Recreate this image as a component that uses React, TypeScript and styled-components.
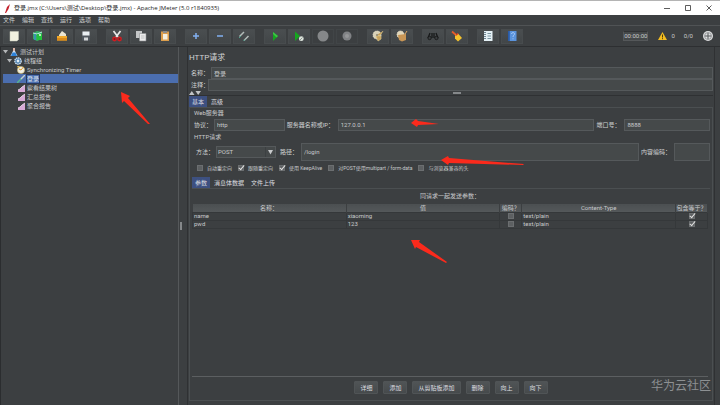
import React from "react";
import styled, { createGlobalStyle, css } from "styled-components";

const Global = createGlobalStyle`
  *, *::before, *::after { box-sizing: border-box; }
  html, body { margin: 0; background: #3c3f41; }
  body, button, input, select {
    font-family: Roboto, "Noto Sans CJK SC", sans-serif;
    font-size: 6px;
    line-height: 8px;
    color: #c8cacc;
  }
`;

const Window = styled.div`
  position: relative;
  display: flex;
  flex-direction: column;
  min-height: 100vh;
  background: #3c3f41;
  overflow: hidden;
`;

const TitleBar = styled.header`
  display: flex;
  align-items: center;
  height: 15px;
  padding: 0 6px 0 5px;
  gap: 4px;
  background: #fff;
  border-top: 1px solid #b4b4b4;
  color: #222;
`;

const Title = styled.span`
  flex: 1;
  font-family: "Open Sans", "Noto Sans CJK SC", sans-serif;
  white-space: nowrap;
`;

const WindowControls = styled.div`
  display: flex;
  gap: 11px;
`;

const ControlButton = styled.button`
  display: flex;
  width: 10px;
  height: 10px;
  padding: 2px;
  border: 0;
  background: none;
`;

const MenuBar = styled.nav`
  display: flex;
  align-items: center;
  gap: 7px;
  height: 11px;
  padding: 0 3px;
  border-bottom: 1px solid #505355;
`;

const MenuButton = styled.button`
  padding: 0;
  border: 0;
  background: none;
  color: #d0d2d3;
`;

const Toolbar = styled.div`
  display: flex;
  align-items: center;
  gap: 9px;
  height: 21px;
  padding: 0 6px 0 3px;
  border-bottom: 1px solid #2d2f31;
`;

const ToolGroup = styled.div`
  display: flex;
  gap: 2px;
`;

const ToolButton = styled.button<{ $flat?: boolean }>`
  display: flex;
  align-items: center;
  justify-content: center;
  width: 22px;
  height: 15px;
  padding: 0;
  border: 1px solid ${(p) => (p.$flat ? "#414547" : "#484c4e")};
  background: ${(p) => (p.$flat ? "#3c3f41" : "linear-gradient(#4a4e50, #424648)")};
`;

const Status = styled.div`
  display: flex;
  align-items: center;
  gap: 9px;
  margin-left: auto;
`;

const Elapsed = styled.output`
  margin-right: 1px;
  border: 1px solid #55585a;
  border-top-color: #303234;
  background: #45494a;
`;

const Warnings = styled.span`
  display: flex;
  align-items: center;
  gap: 4px;
`;

const Body = styled.div`
  display: flex;
  flex: 1;
`;

const Sidebar = styled.aside`
  width: 178px;
  padding-left: 2px;
  background: #3c3f41;
  border-left: 1px solid #2b2d2f;
`;

const Tree = styled.ul`
  margin: 0;
  padding: 0;
  list-style: none;
`;

const TreeRow = styled.li<{ $depth: number; $selected?: boolean }>`
  display: flex;
  align-items: center;
  gap: 2px;
  height: 9px;
  padding-left: ${(p) => [0, 4, 14][p.$depth]}px;
  white-space: nowrap;
  background: ${(p) => (p.$selected ? "#4b6eaf" : "transparent")};
`;

const TreeLabel = styled.span<{ $selected?: boolean }>`
  ${(p) => p.$selected && css`outline: 1px solid #27385c; color: #dde3ee;`}
`;

const Splitter = styled.div`
  display: flex;
  align-items: center;
  width: 10px;
  padding-left: 1px;
  border-left: 1px solid #55585a;
  border-right: 1px solid #2f3133;
`;

const Grip = styled.span<{ $wide?: boolean }>`
  width: ${(p) => (p.$wide ? 8 : 2)}px;
  height: ${(p) => (p.$wide ? 2 : 8)}px;
  background: #85888a;
`;

const Main = styled.main`
  display: flex;
  flex: 1;
  flex-direction: column;
  min-width: 0;
  margin-right: 5px;
  padding: 5px 1px 4px 1px;
  border-right: 1px solid #2f3133;
`;

const Heading = styled.h1`
  margin: 0 0 3px;
  font-size: 8px;
  line-height: 12px;
  font-weight: 400;
  color: #d0d2d3;
`;

const Row = styled.div<{ $height: number; $indent?: number }>`
  display: flex;
  align-items: center;
  height: ${(p) => p.$height}px;
  padding-left: ${(p) => p.$indent ?? 0}px;
`;

const Label = styled.label<{ $width: number }>`
  flex: none;
  width: ${(p) => p.$width}px;
  padding-left: 2px;
  white-space: nowrap;
  color: #d0d2d3;
`;

const fieldLook = css`
  min-width: 0;
  border: 1px solid #55595b;
  border-radius: 0;
  background: #45494a;
  outline: 0;
`;

const TextField = styled.input<{ $grow: number; $tall?: boolean }>`
  ${fieldLook}
  flex: ${(p) => p.$grow} 1 0;
  height: ${(p) => (p.$tall ? 18 : 12)}px;
  padding: 0 2px;
`;

const SelectBox = styled.span`
  position: relative;
  display: flex;
  width: 60px;
  margin-right: 2px;
`;

const Select = styled.select`
  ${fieldLook}
  appearance: none;
  width: 100%;
  height: 12px;
  padding: 0 1px;
`;

const SelectArrow = styled.svg`
  position: absolute;
  right: 1px;
  top: 1px;
  pointer-events: none;
`;

const Collapse = styled.div`
  display: flex;
  align-items: center;
  height: 5px;
  border-bottom: 1px solid #2f3133;
`;

const CollapseGrip = styled.div`
  display: flex;
  flex: 1;
  justify-content: center;
`;

const Tabs = styled.div`
  display: flex;
  gap: 1px;
  height: 12px;
  border-bottom: 1px solid #4b4f51;
`;

const Tab = styled.button<{ $active?: boolean }>`
  padding: 0 3px;
  border: 0;
  background: ${(p) => (p.$active ? "#3d5080" : "transparent")};
  color: #dcdee0;
`;

const Panel = styled.section`
  display: flex;
  flex: 1;
  flex-direction: column;
  padding: 0 2px 2px 2px;
  border: 1px solid #4b4f51;
  border-top: 0;
`;

const Legend = styled.h2`
  margin: 0;
  padding-left: 2px;
  font-size: 6px;
  line-height: 9px;
  font-weight: 400;
`;

const Options = styled.div`
  display: flex;
  align-items: center;
  gap: 6px;
  height: 12px;
  padding-left: 5px;
  margin-bottom: 3px;
`;

const Option = styled.label`
  display: flex;
  align-items: center;
  gap: 4px;
  font-size: 5px;
  white-space: nowrap;
`;

const Check = styled.input`
  position: relative;
  appearance: none;
  flex: none;
  width: 6px;
  height: 6px;
  margin: 0;
  border: 1px solid #6b6e70;
  background: #5d6062;
  &:checked::after {
    content: "";
    position: absolute;
    left: 1px;
    top: -2px;
    width: 3px;
    height: 6px;
    border: solid #e0e0e0;
    border-width: 0 1px 1px 0;
    transform: rotate(40deg);
  }
`;

const ParamsPanel = styled.div`
  display: flex;
  flex: 1;
  flex-direction: column;
  padding: 2px 2px 0 0;
`;

const Caption = styled.div`
  height: 13px;
  padding-top: 1px;
  text-align: center;
`;

const TableArea = styled.div`
  flex: 1;
  border-bottom: 1px solid #5c5f61;
`;

const Table = styled.table`
  width: 100%;
  table-layout: fixed;
  border-collapse: collapse;
`;

const HeaderCell = styled.th`
  height: 8px;
  padding: 0;
  border-right: 1px solid #3c3f41;
  background: linear-gradient(#4b4f51, #54585a);
  font-weight: 400;
  line-height: 7px;
  white-space: nowrap;
`;

const Cell = styled.td<{ $center?: boolean }>`
  height: 8px;
  padding: 0 1px;
  border: 1px solid #35383a;
  line-height: 6px;
  text-align: ${(p) => (p.$center ? "center" : "left")};
  & > input { display: block; margin: 0 auto; }
`;

const Actions = styled.div`
  display: flex;
  justify-content: center;
  gap: 5px;
  padding: 4px 0;
`;

const ActionButton = styled.button`
  height: 13px;
  padding: 0 5px;
  border: 1px solid #505456;
  border-radius: 1px;
  background: linear-gradient(#505456, #464a4c);
  color: #dcdee0;
`;

const Overlay = styled.svg`
  position: absolute;
  left: 0;
  top: 0;
  pointer-events: none;
`;

const Watermark = styled.div`
  position: absolute;
  right: 9px;
  bottom: 10px;
  font-size: 12px;
  line-height: 18px;
  color: #8d9092;
`;

const iconShapes: Record<string, React.ReactNode> = {
  新建: <path d="M2 1.5h8.500v8L9 11H2z" fill="#f1f1df" stroke="#c6c8b8" strokeWidth=".5" />,
  模板: (
    <>
      <path d="M1 3l4-2 5 1v7l-5 2-4-2z" fill="#35ad63" />
      <path d="M1 3l4 1 5-2" stroke="#b9e6df" fill="none" />
      <rect x="5" y="4" width="5" height="6" fill="#23c23d" />
      <path d="M3 4v6" stroke="#3d8bc9" strokeWidth="1.500" />
      <circle cx="8" cy="5" r="1" fill="#eafbe8" />
    </>
  ),
  打开: (
    <>
      <path d="M3 5l3-4 4 3v3H3z" fill="#ece6d2" />
      <path d="M1 6h10v4.500H1z" fill="#f0a92b" />
      <path d="M1 8h10v2.500H1z" fill="#db8a19" />
    </>
  ),
  保存: (
    <>
      <rect x="2" y="1.500" width="8" height="9" fill="#50575f" />
      <rect x="2.500" y="1.500" width="7" height="4" fill="#e9eef2" />
      <rect x="4" y="7.500" width="4" height="3" fill="#d3d6d8" />
    </>
  ),
  剪切: (
    <>
      <path d="M2.500 1l4.500 6M9.500 1L5 7" stroke="#e8e8e8" strokeWidth="1.700" />
      <circle cx="3.500" cy="9" r="1.700" fill="#7d1d20" stroke="#d01d22" strokeWidth="1.400" />
      <circle cx="8.500" cy="9" r="1.700" fill="#7d1d20" stroke="#d01d22" strokeWidth="1.400" />
    </>
  ),
  复制: (
    <>
      <path d="M1 1h6v7H1z" fill="#c4c6c7" />
      <path d="M4.500 3.500h6.500V11H4.500z" fill="#ececec" stroke="#8c8f91" strokeWidth=".6" />
      <path d="M6 6h3.500M6 8h3.500" stroke="#a4a7a9" strokeWidth=".6" />
    </>
  ),
  粘贴: (
    <>
      <rect x="2" y="1.500" width="8" height="9.500" fill="#dc9e4c" />
      <rect x="4" y="1" width="4" height="2" fill="#8b8b8b" />
      <path d="M4 4h4.500v5.500H4z" fill="#f3efe2" />
    </>
  ),
  展开: <path d="M6 3v6M3 6h6" stroke="#82b1f2" strokeWidth="1.500" />,
  折叠: <path d="M3 6h6" stroke="#82b1f2" strokeWidth="1.500" />,
  切换: (
    <>
      <path d="M1.500 6.500L6 2M6 10.500L10.500 6" stroke="#b3bcb9" strokeWidth="1.500" />
      <path d="M1 8l2-2M5.500 11l1.500-1.500" stroke="#4d9f8c" />
    </>
  ),
  启动: (
    <>
      <path d="M4 2l5 4-5 5z" fill="#15a51f" />
      <path d="M4 2l5 4-1.500 1.500L4 4z" fill="#3cc445" />
    </>
  ),
  无间隔启动: (
    <>
      <path d="M2 1.500l5 4.500-5 5z" fill="#15a51f" />
      <circle cx="8.300" cy="8.700" r="2.400" fill="#dce4dc" />
      <path d="M7 10l2.500-2.500" stroke="#6a716b" strokeWidth=".7" />
    </>
  ),
  停止: <circle cx="6" cy="6" r="5.500" fill="#858789" />,
  关闭: (
    <>
      <circle cx="6" cy="6" r="4.500" fill="#808285" />
      <circle cx="6" cy="6" r="2" fill="#959799" />
    </>
  ),
  清除: (
    <>
      <circle cx="5" cy="5" r="4" fill="#d9d2b8" strokeDasharray="1 1" stroke="#efe9d0" />
      <path d="M4 5.500h4L11 1M4 6h5v3l-3 2z" fill="#c8a25c" stroke="#d8c184" strokeWidth=".7" />
      <circle cx="5" cy="5" r="1" fill="#8c8876" />
    </>
  ),
  清除全部: (
    <>
      <circle cx="4.500" cy="4.500" r="3.500" fill="#e2d7ba" strokeDasharray="1 1" stroke="#f0e8d0" />
      <path d="M2 5l8-1v6l-4 1.500-3-1.500z" fill="#c99655" />
      <path d="M9 4l2-3" stroke="#dba55f" />
    </>
  ),
  搜索: (
    <>
      <path d="M3 3L1 8M9 3l2 5M5 3v5M7 3v5" stroke="#17191a" strokeWidth="1.300" />
      <circle cx="2.600" cy="8" r="1.700" fill="#3a3e40" stroke="#111" strokeWidth=".7" />
      <circle cx="9.400" cy="8" r="1.700" fill="#3a3e40" stroke="#111" strokeWidth=".7" />
    </>
  ),
  重置搜索: (
    <>
      <path d="M1 1.500l4 3.500" stroke="#e45b2b" strokeWidth="1.800" />
      <path d="M4 4.500l3-1 4 4.500-4 3.500-3-3z" fill="#f4c22d" />
      <path d="M4.500 5.500l2.500-2" stroke="#d72e25" strokeWidth="1.300" />
    </>
  ),
  函数助手: (
    <>
      <rect x="2" y="1" width="8.500" height="10" fill="#e4f0f5" />
      <path d="M3 2v8" stroke="#486170" strokeDasharray="1 1" strokeWidth="1.500" />
      <path d="M5.500 3.500h3.500M5.500 6h3.500M5.500 8.500h3.500" stroke="#6e8b99" strokeWidth=".9" />
    </>
  ),
  帮助: (
    <>
      <path d="M2 1h8.500v10H2z" fill="#5a93dc" />
      <path d="M2 1h1.800v10H2z" fill="#2a5ba7" />
      <path d="M5.500 4c0-2 3.500-1.700 3 .2C8.200 5.400 7 5.300 7 7M7 8.300v1" stroke="#b9d6fb" fill="none" strokeWidth=".8" />
    </>
  ),
};

const Icon = ({ name }: { name: string }) => (
  <svg width="12" height="12" viewBox="0 0 12 12" fill="none" aria-hidden="true">
    {iconShapes[name]}
  </svg>
);

const toolGroups = [
  ["新建", "模板", "打开", "保存"],
  ["剪切", "复制", "粘贴"],
  ["展开", "折叠", "切换"],
  ["启动", "无间隔启动", "停止", "关闭"],
  ["清除", "清除全部"],
  ["搜索", "重置搜索"],
  ["函数助手", "帮助"],
];

const treeShapes: Record<string, React.ReactNode> = {
  plan: (
    <>
      <path d="M3 0h2v3l2.500 5h-7L3 3z" fill="#cfe2f4" />
      <path d="M2.500 4.500h3L7 8H1z" fill="#2d82d8" />
      <path d="M4 0v3" stroke="#e88a5a" />
    </>
  ),
  threads: (
    <>
      <circle cx="4" cy="4" r="3.200" fill="#4c7fae" stroke="#d4e2ed" strokeWidth="1.300" strokeDasharray="1.500 .6" />
      <circle cx="4" cy="4" r="1.400" fill="#e4eef5" />
    </>
  ),
  timer: (
    <>
      <circle cx="4" cy="4" r="3.600" fill="#f0efe4" stroke="#c9b66f" strokeWidth=".6" />
      <path d="M4 4l2.500-3M4 4L2 3" stroke="#e09a2a" />
      <path d="M0 0h3L1 2z" fill="#e5bd55" />
    </>
  ),
  sampler: (
    <>
      <path d="M0 8L5 3" stroke="#58b48d" strokeWidth="1.400" />
      <path d="M4 4l4-4" stroke="#c4cfd1" strokeWidth="1.400" />
    </>
  ),
  listener: (
    <>
      <path d="M1 8V6l2-1 2-2 3-2v7z" fill="#d6a9d6" />
      <path d="M1 6l2-1 2-2 3-2" stroke="#eee2ee" strokeWidth=".8" />
    </>
  ),
};

const treeItems = [
  { depth: 0, icon: "plan", text: "测试计划" },
  { depth: 1, icon: "threads", text: "线程组" },
  { depth: 2, icon: "timer", text: "Synchronizing Timer" },
  { depth: 2, icon: "sampler", text: "登录", selected: true },
  { depth: 2, icon: "listener", text: "察看结果树" },
  { depth: 2, icon: "listener", text: "汇总报告" },
  { depth: 2, icon: "listener", text: "聚合报告" },
];

const options = [
  { text: "自动重定向", checked: false },
  { text: "跟随重定向", checked: true },
  { text: "使用 KeepAlive", checked: true },
  { text: "对POST使用multipart / form-data", checked: false },
  { text: "与浏览器兼容的头", checked: false },
];

const params = [
  { name: "name", value: "xiaoming" },
  { name: "pwd", value: "123" },
];

export default function App() {
  return (
    <Window>
      <Global />
      <TitleBar>
        <svg width="5" height="9" viewBox="0 0 5 9" aria-hidden="true">
          <path d="M5 0L3.500 5 1 9H0L2 3z" fill="#c4202b" />
        </svg>
        <Title>登录.jmx (C:\Users\测试\Desktop\登录.jmx) - Apache JMeter (5.0 r1840935)</Title>
        <WindowControls>
          {[
            ["最小化", "M0 3.500h6"],
            ["最大化", "M.5.5h5v5h-5z"],
            ["关闭窗口", "M.5.5l5 5m0-5l-5 5"],
          ].map(([label, d]) => (
            <ControlButton key={label} aria-label={label}>
              <svg width="6" height="6" viewBox="0 0 6 6">
                <path d={d} fill="none" stroke="#333" strokeWidth=".8" />
              </svg>
            </ControlButton>
          ))}
        </WindowControls>
      </TitleBar>
      <MenuBar>
        {["文件", "编辑", "查找", "运行", "选项", "帮助"].map((m) => (
          <MenuButton key={m}>{m}</MenuButton>
        ))}
      </MenuBar>
      <Toolbar>
        {toolGroups.map((group) => (
          <ToolGroup key={group[0]}>
            {group.map((name) => (
              <ToolButton key={name} aria-label={name} $flat={name === "停止" || name === "关闭"}>
                <Icon name={name} />
              </ToolButton>
            ))}
          </ToolGroup>
        ))}
        <Status>
          <Elapsed>00:00:00</Elapsed>
          <Warnings>
            <svg width="9" height="8" viewBox="0 0 9 8" aria-hidden="true">
              <path d="M4.500 0L9 8H0z" fill="#f3bd20" />
              <path d="M4.500 2.500v3M4.500 6.200v1" stroke="#4c3b08" />
            </svg>
            0
          </Warnings>
          <span>0/0</span>
          <svg width="12" height="12" viewBox="0 0 12 12" aria-hidden="true">
            <circle cx="6" cy="6" r="5" fill="#dedfe0" />
            <circle cx="6" cy="6" r="3.500" fill="none" stroke="#85888a" strokeWidth=".8" />
            <path d="M6 3v6M3 6h6" stroke="#55585a" strokeWidth="1" />
          </svg>
        </Status>
      </Toolbar>
      <Body>
        <Sidebar>
          <Tree>
            {treeItems.map((item) => (
              <TreeRow key={item.text} $depth={item.depth} $selected={item.selected}>
                {item.depth < 2 && (
                  <svg width="5" height="5" viewBox="0 0 5 5" aria-hidden="true">
                    <path d="M0 1h5L2.500 4.500z" fill="#b4b6b8" />
                  </svg>
                )}
                <svg width="8" height="8" viewBox="0 0 8 8" fill="none" aria-hidden="true">
                  {treeShapes[item.icon]}
                </svg>
                <TreeLabel $selected={item.selected}>{item.text}</TreeLabel>
              </TreeRow>
            ))}
          </Tree>
        </Sidebar>
        <Splitter>
          <Grip />
        </Splitter>
        <Main>
          <Heading>HTTP请求</Heading>
          <Row $height={12}>
            <Label htmlFor="name" $width={22}>名称：</Label>
            <TextField id="name" $grow={1} defaultValue="登录" />
          </Row>
          <Row $height={12}>
            <Label htmlFor="comment" $width={19}>注释：</Label>
            <TextField id="comment" $grow={1} />
          </Row>
          <Collapse>
            <svg width="12" height="4" viewBox="0 0 12 4" aria-hidden="true">
              <path d="M0 4h5.500L2.800 0zM6.500 0H12L9.200 4z" fill="#c2c4c6" />
            </svg>
            <CollapseGrip>
              <Grip $wide />
            </CollapseGrip>
          </Collapse>
          <Tabs>
            <Tab $active>基本</Tab>
            <Tab>高级</Tab>
          </Tabs>
          <Panel>
            <Legend>Web服务器</Legend>
            <Row $height={15}>
              <Label htmlFor="protocol" $width={22}>协议：</Label>
              <TextField id="protocol" $grow={65} defaultValue="http" />
              <Label htmlFor="server" $width={53}>服务器名称或IP：</Label>
              <TextField id="server" $grow={252} defaultValue="127.0.0.1" />
              <Label htmlFor="port" $width={30}>端口号：</Label>
              <TextField id="port" $grow={80} defaultValue="8888" />
            </Row>
            <Legend>HTTP请求</Legend>
            <Row $height={21} $indent={2}>
              <Label htmlFor="method" $width={22}>方法：</Label>
              <SelectBox>
                <Select id="method" defaultValue="POST">
                  <option>POST</option>
                </Select>
                <SelectArrow width="10" height="10" viewBox="0 0 10 10" aria-hidden="true">
                  <path d="M0 0v10" stroke="#35383a" />
                  <path d="M3 3h5L5.500 7.500z" fill="#c8cacc" />
                </SelectArrow>
              </SelectBox>
              <Label htmlFor="path" $width={23}>路径：</Label>
              <TextField id="path" $grow={332} $tall defaultValue="/login" />
              <Label htmlFor="encoding" $width={35}>内容编码：</Label>
              <TextField id="encoding" $grow={30} $tall />
            </Row>
            <Options>
              {options.map((o) => (
                <Option key={o.text}>
                  <Check type="checkbox" defaultChecked={o.checked} />
                  {o.text}
                </Option>
              ))}
            </Options>
            <Tabs>
              <Tab $active>参数</Tab>
              <Tab>消息体数据</Tab>
              <Tab>文件上传</Tab>
            </Tabs>
            <ParamsPanel>
              <Caption>同请求一起发送参数：</Caption>
              <TableArea>
                <Table>
                  <colgroup>
                    <col />
                    <col />
                    <col width="22" />
                    <col />
                    <col width="32" />
                  </colgroup>
                  <thead>
                    <tr>
                      {["名称：", "值", "编码？", "Content-Type", "包含等于？"].map((h) => (
                        <HeaderCell key={h}>{h}</HeaderCell>
                      ))}
                    </tr>
                  </thead>
                  <tbody>
                    {params.map((p) => (
                      <tr key={p.name}>
                        <Cell>{p.name}</Cell>
                        <Cell>{p.value}</Cell>
                        <Cell $center>
                          <Check type="checkbox" aria-label="编码" />
                        </Cell>
                        <Cell>text/plain</Cell>
                        <Cell $center>
                          <Check type="checkbox" aria-label="包含等于" defaultChecked />
                        </Cell>
                      </tr>
                    ))}
                  </tbody>
                </Table>
              </TableArea>
            </ParamsPanel>
            <Actions>
              {["详细", "添加", "从剪贴板添加", "删除", "向上", "向下"].map((a) => (
                <ActionButton key={a}>{a}</ActionButton>
              ))}
            </Actions>
          </Panel>
        </Main>
      </Body>
      <Overlay width="720" height="405" viewBox="0 0 720 405" aria-hidden="true">
        <g fill="#fb2a1c">
          <path d="M121 92l9 4-2 2 22 26-2 0-24-23-2 2z" />
          <path d="M411 123l5-4 2 2 21 3-21 1-1 2z" />
          <path d="M441 160l7-4 1 2 75 6-1 1-74-2-1 2z" />
          <path d="M411 240l9 0-1 2 28 20-1 1-30-16-1 2z" />
        </g>
      </Overlay>
      <Watermark>华为云社区</Watermark>
    </Window>
  );
}
